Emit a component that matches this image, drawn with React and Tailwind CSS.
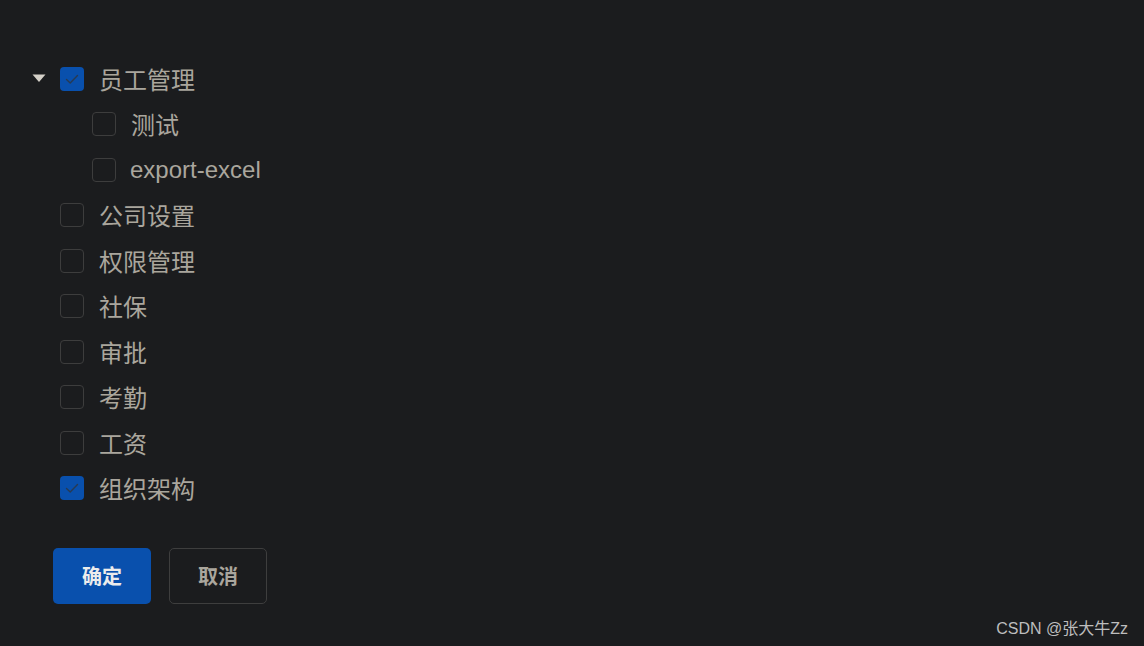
import React from "react";

const cjk = { fontFamily: '"Noto Sans CJK SC", "Liberation Sans", sans-serif' };
const latin = { fontFamily: '"Liberation Sans", "Noto Sans CJK SC", sans-serif' };

function Box({ checked }) {
  return checked ? (
    <span className="flex h-6 w-6 shrink-0 items-center justify-center rounded-[4px] bg-[#0950ad]">
      <svg width="16" height="16" viewBox="0 0 16 16" fill="none">
        <path d="M2.5 8.5 L6.2 12 L13.5 4.5" stroke="#283a52" strokeWidth="1.4" strokeLinecap="round" strokeLinejoin="round" />
      </svg>
    </span>
  ) : (
    <span className="h-6 w-6 shrink-0 rounded-[4px] border border-[#3d3d3d] bg-[#1b1c1e]" />
  );
}

function Row({ label, checked, indent, caret, isLatin }) {
  return (
    <div className={`relative flex h-[45.5px] items-center ${indent ? "pl-[92px]" : "pl-[60px]"}`}>
      {caret && (
        <svg className="absolute left-[32px] top-[18px]" width="14" height="9" viewBox="0 0 14 9">
          <path d="M0.5 0.5 L13.5 0.5 L7 8 Z" fill="#d4d0c8" />
        </svg>
      )}
      <Box checked={checked} />
      <span
        className={`${isLatin ? "ml-[14px]" : "ml-[15px]"} text-[24px] leading-none text-[#aaa69d]`}
        style={isLatin ? latin : cjk}
      >
        {label}
      </span>
    </div>
  );
}

export default function App() {
  const rows = [
    { label: "员工管理", checked: true, caret: true },
    { label: "测试", indent: true },
    { label: "export-excel", indent: true, isLatin: true },
    { label: "公司设置" },
    { label: "权限管理" },
    { label: "社保" },
    { label: "审批" },
    { label: "考勤" },
    { label: "工资" },
    { label: "组织架构", checked: true },
  ];
  return (
    <div className="relative h-[646px] w-[1144px] overflow-hidden bg-[#1b1c1e]" style={cjk}>
      <div className="flex flex-col pt-[56px]">
        {rows.map((r) => (
          <Row key={r.label} {...r} />
        ))}
      </div>
      <div className="mt-[37px] flex gap-[18px] pl-[53px]">
        <button className="flex h-[56px] w-[98px] items-center justify-center rounded-[5px] bg-[#0950ad] text-[20px] font-bold text-[#ececec]">
          确定
        </button>
        <button className="flex h-[56px] w-[98px] items-center justify-center rounded-[5px] border border-[#3e3e3e] bg-[#1b1c1e] text-[20px] font-bold text-[#aaa69d]">
          取消
        </button>
      </div>
      <div
        className="absolute bottom-[9px] right-[16px] text-[16px] leading-none text-[#bdbdbd]"
        style={latin}
      >
        CSDN @张大牛Zz
      </div>
    </div>
  );
}
